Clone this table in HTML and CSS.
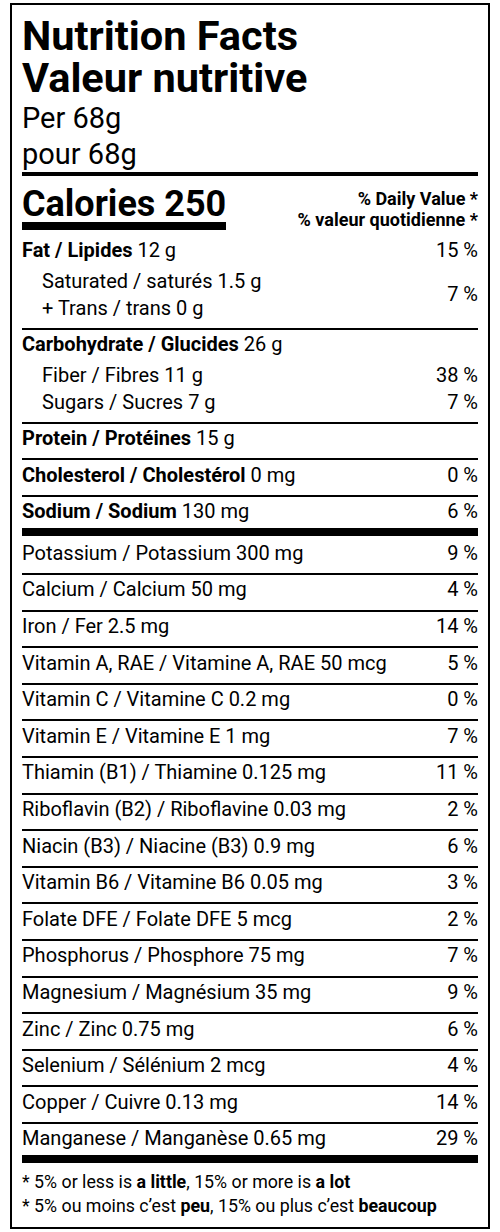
FILE: index.html
```html
<!DOCTYPE html>
<html lang="en">
<head>
    <meta charset="UTF-8">
    <title>Nutrition Facts</title>
    <link rel="stylesheet" href="styles.css">
</head>
<body>
<div class="label">
    <h1 class="title">Nutrition Facts<br>Valeur nutritive</h1>
    <p class="serving">Per 68g<br>pour 68g</p>

    <div class="calories-row">
        <div class="calories">Calories 250</div>
        <div class="dv-head">% Daily Value *<br>% valeur quotidienne *</div>
    </div>

    <div class="section first">
        <div class="line"><span><b>Fat / Lipides</b> 12 g</span><span>15 %</span></div>
        <div class="sub-group">
            <div>
                <div>Saturated / saturés 1.5 g</div>
                <div>+ Trans / trans 0 g</div>
            </div>
            <span>7 %</span>
        </div>
    </div>
    <div class="section">
        <div class="line"><span><b>Carbohydrate / Glucides</b> 26 g</span></div>
        <div class="subs">
            <div class="line"><span>Fiber / Fibres 11 g</span><span>38 %</span></div>
            <div class="line"><span>Sugars / Sucres 7 g</span><span>7 %</span></div>
        </div>
    </div>
    <div class="section">
        <div class="line"><span><b>Protein / Protéines</b> 15 g</span></div>
    </div>
    <div class="section">
        <div class="line"><span><b>Cholesterol / Cholestérol</b> 0 mg</span><span>0 %</span></div>
    </div>
    <div class="section thick">
        <div class="line"><span><b>Sodium / Sodium</b> 130 mg</span><span>6 %</span></div>
    </div>

    <div class="section"><div class="line"><span>Potassium / Potassium 300 mg</span><span>9 %</span></div></div>
    <div class="section"><div class="line"><span>Calcium / Calcium 50 mg</span><span>4 %</span></div></div>
    <div class="section"><div class="line"><span>Iron / Fer 2.5 mg</span><span>14 %</span></div></div>
    <div class="section"><div class="line"><span>Vitamin A, RAE / Vitamine A, RAE 50 mcg</span><span>5 %</span></div></div>
    <div class="section"><div class="line"><span>Vitamin C / Vitamine C 0.2 mg</span><span>0 %</span></div></div>
    <div class="section"><div class="line"><span>Vitamin E / Vitamine E 1 mg</span><span>7 %</span></div></div>
    <div class="section"><div class="line"><span>Thiamin (B1) / Thiamine 0.125 mg</span><span>11 %</span></div></div>
    <div class="section"><div class="line"><span>Riboflavin (B2) / Riboflavine 0.03 mg</span><span>2 %</span></div></div>
    <div class="section"><div class="line"><span>Niacin (B3) / Niacine (B3) 0.9 mg</span><span>6 %</span></div></div>
    <div class="section"><div class="line"><span>Vitamin B6 / Vitamine B6 0.05 mg</span><span>3 %</span></div></div>
    <div class="section"><div class="line"><span>Folate DFE / Folate DFE 5 mcg</span><span>2 %</span></div></div>
    <div class="section"><div class="line"><span>Phosphorus / Phosphore 75 mg</span><span>7 %</span></div></div>
    <div class="section"><div class="line"><span>Magnesium / Magnésium 35 mg</span><span>9 %</span></div></div>
    <div class="section"><div class="line"><span>Zinc / Zinc 0.75 mg</span><span>6 %</span></div></div>
    <div class="section"><div class="line"><span>Selenium / Sélénium 2 mcg</span><span>4 %</span></div></div>
    <div class="section"><div class="line"><span>Copper / Cuivre 0.13 mg</span><span>14 %</span></div></div>
    <div class="section thick"><div class="line"><span>Manganese / Manganèse 0.65 mg</span><span>29 %</span></div></div>

    <div class="footnote">
        <div>* 5% or less is <b>a little</b>, 15% or more is <b>a lot</b></div>
        <div>* 5% ou moins c’est <b>peu</b>, 15% ou plus c’est <b>beaucoup</b></div>
    </div>
</div>
</body>
</html>
```

FILE: styles.css
```css
html, body {
    margin: 0;
    background: #fff;
}

body {
    font-family: Roboto, "Liberation Sans", sans-serif;
    color: #000;
}

.label {
    margin: 3px 10px;
    border: 2px solid #000;
    padding: 10px 10px 9px;
}

.title {
    margin: 0;
    font-size: 41.5px;
    line-height: 42px;
    font-weight: 700;
}

.serving {
    margin: 1px 0 0;
    font-size: 29px;
    line-height: 36px;
    border-bottom: 4px solid #000;
}

.calories-row {
    display: flex;
    justify-content: space-between;
    align-items: flex-start;
    padding-top: 9.5px;

    .calories {
        font-size: 36px;
        line-height: 36.5px;
        font-weight: 700;
        border-bottom: 8px solid #000;
    }

    .dv-head {
        margin-top: 2px;
        font-size: 18px;
        line-height: 21px;
        font-weight: 700;
        text-align: right;
    }
}

.section {
    padding: 1.5px 0 6.1px;
    border-bottom: 2px solid #000;
    font-size: 20px;
    line-height: 27px;

    &.first {
        padding-top: 7px;
    }

    &.thick {
        padding-bottom: 3px;
        border-bottom-width: 8px;
    }
}

.thick + .section {
    padding-top: 3.5px;
}

.line {
    display: flex;
    justify-content: space-between;
}

.subs, .sub-group {
    margin-top: 3.5px;
    padding-left: 20px;
}

.sub-group {
    display: flex;
    justify-content: space-between;
    align-items: center;
}

.footnote {
    padding-top: 7px;
    font-size: 17.8px;
    line-height: 24px;
}
```
